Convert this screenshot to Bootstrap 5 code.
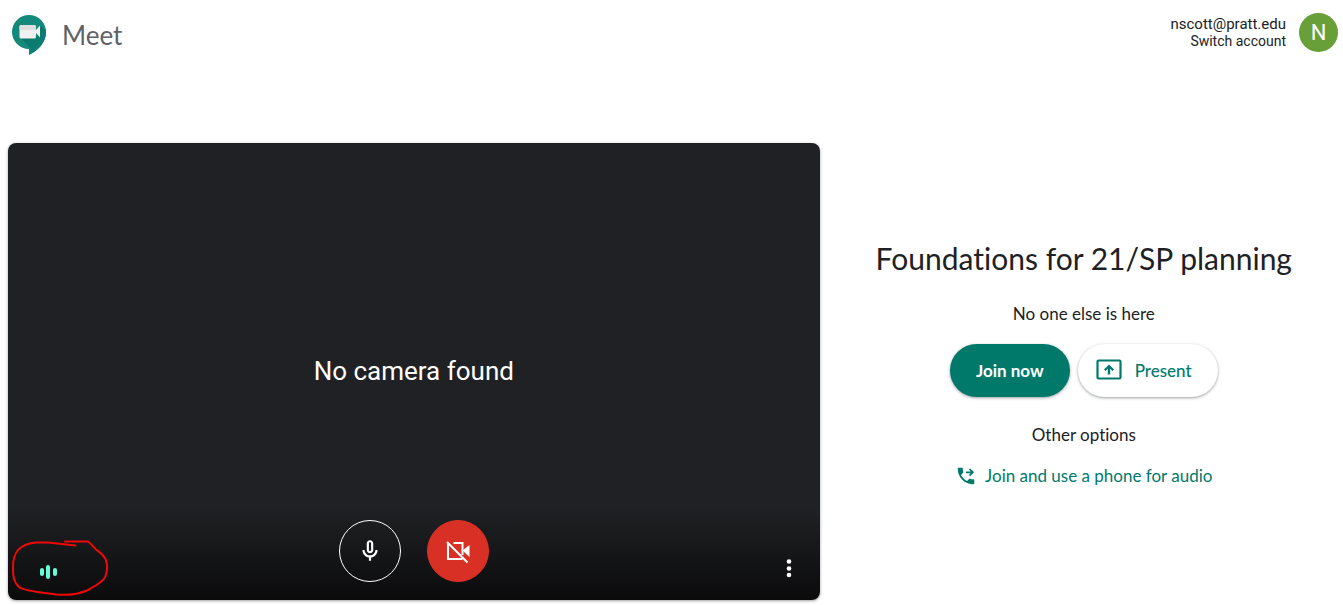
<!DOCTYPE html>
<html lang="en">
<head>
<meta charset="utf-8">
<meta name="viewport" content="width=device-width, initial-scale=1">
<title>Meet</title>
<link href="https://cdn.jsdelivr.net/npm/bootstrap@5.3.0/dist/css/bootstrap.min.css" rel="stylesheet">
<style>
  :root { --meet-green: #00796b; --ink: #202124; }
  body { font-family: Roboto, "Liberation Sans", sans-serif; color: var(--ink); background: #fff; font-variant-ligatures: none; }
  svg { display: block; flex-shrink: 0; }
  .topbar { padding: 13px 5px 0 8px; min-height: 143px; }
  .brand-name { font: 400 26px/36px Lato, sans-serif; color: #5f6368; }
  .account { font-size: 15px; line-height: 17px; padding: 3px 13px 0 0; }
  .account-switch { font-size: 14px; color: inherit; }
  .avatar { width: 39px; height: 39px; background: #689f38; color: #fff; font-size: 22px; line-height: 39px; }
  .stage { display: grid; grid-template-columns: minmax(0, 21fr) minmax(0, 13fr); gap: 13px; padding: 0 8px 5px; }
  .preview { aspect-ratio: 16 / 9; border-radius: 8px; box-shadow: 0 1px 3px rgba(60,64,67,.5);
    background: linear-gradient(to bottom, #202124 80%, #0b0b0c 100%); }
  .preview-text { font-size: 26px; line-height: 32px; color: #fff; }
  .controls { bottom: 18px; gap: 26px; }
  .round-btn { width: 62px; height: 62px; border: 1px solid #fff; background: transparent; color: #fff; }
  .round-btn.off { background: #d93025; border-color: #d93025; }
  .more-btn { right: 19px; bottom: 20px; color: #fff; }
  .mic-level { left: 3px; bottom: 3px; }
  .join-panel { font-family: "Google Sans", Lato, sans-serif; padding-bottom: 18px; }
  .meeting-title { font-size: 30px; line-height: 40px; font-weight: 400; margin-bottom: 26px; }
  .note { font-size: 17px; line-height: 20px; }
  .pill { height: 53px; border-radius: 27px; padding: 0 26px; border: 0; font-size: 17px; font-weight: 700; color: var(--meet-green); background: #fff;
    box-shadow: 0 1px 3px rgba(60,64,67,.5); }
  .pill.solid { background: var(--meet-green); color: #fff; }
  .pill.outlined { padding: 0 26px 0 18px; font-weight: 500; gap: 13px; }
  .phone-link { font-size: 17px; line-height: 22px; color: var(--meet-green); }
  @media (max-width: 800px) { .stage { grid-template-columns: minmax(0, 1fr); } }
</style>
</head>
<body>
<header class="topbar d-flex justify-content-between align-items-start">
  <div class="d-flex align-items-center">
    <svg width="42" height="44" viewBox="0 1 42 44" aria-hidden="true">
      <defs><linearGradient id="shade" x1="0" y1="0" x2="1" y2="1"><stop offset="0" stop-color="#0b6f64"/><stop offset="1" stop-color="#0b8577"/></linearGradient></defs>
      <path d="M21 3a17 17 0 0 0 0 34v6C31 38 38 30 38 20A17 17 0 0 0 21 3z" fill="#12897b"/>
      <path d="M13 26 23 36.500 21.500 42.500C30 38 38 31 38 20V18L31.500 13 28 26z" fill="url(#shade)"/>
      <path d="M13 13h13.500a1.500 1.500 0 0 1 1.500 1.500V18l4-4.500v12L28 21v4a1.500 1.500 0 0 1-1.500 1.500H13a1.500 1.500 0 0 1-1.500-1.500V14.500A1.500 1.500 0 0 1 13 13z" fill="#f1f1f1"/>
      <path d="M11.500 18v-3.500A1.500 1.500 0 0 1 13 13h13.500a1.500 1.500 0 0 1 1.500 1.500V18z" fill="#dedede"/>
    </svg>
    <span class="brand-name ps-2 ms-1">Meet</span>
  </div>
  <div class="d-flex">
    <div class="account text-end">
      <div>nscott@pratt.edu</div>
      <a class="account-switch text-decoration-none d-block" href="#">Switch account</a>
    </div>
    <div class="avatar rounded-circle text-center">N</div>
  </div>
</header>

<main class="stage">
  <section class="preview position-relative d-flex align-items-center justify-content-center" aria-label="Camera preview">
    <div class="preview-text">No camera found</div>
    <div class="controls position-absolute start-50 translate-middle-x d-flex">
      <button type="button" class="round-btn rounded-circle d-flex align-items-center justify-content-center p-0" aria-label="Turn off microphone">
        <svg width="26" height="26" viewBox="0 0 24 24" fill="currentColor"><path d="M12 14c1.660 0 3-1.340 3-3V5c0-1.660-1.340-3-3-3S9 3.340 9 5v6c0 1.660 1.340 3 3 3zm-1-9c0-.55.45-1 1-1s1 .45 1 1v6c0 .55-.45 1-1 1s-1-.45-1-1V5zm6 6c0 2.760-2.240 5-5 5s-5-2.240-5-5H5c0 3.530 2.610 6.430 6 6.920V21h2v-3.080c3.390-.49 6-3.390 6-6.920h-2z"/></svg>
      </button>
      <button type="button" class="round-btn off rounded-circle d-flex align-items-center justify-content-center p-0" aria-label="Turn on camera">
        <svg width="28" height="28" viewBox="0 0 28 28" fill="none" stroke="currentColor" stroke-width="2"><path d="M4 5.500V22h14.500M3 5l20.500 20.500M9.500 6h9v12"/><path d="M18.500 13.500 25.500 8v12z" fill="currentColor" stroke="none"/></svg>
      </button>
    </div>
    <button type="button" class="more-btn btn border-0 p-0 position-absolute" aria-label="More options">
      <svg width="24" height="24" viewBox="0 0 24 24" fill="currentColor"><circle cx="12" cy="5.500" r="2.300"/><circle cx="12" cy="12.500" r="2.300"/><circle cx="12" cy="19" r="2.300"/></svg>
    </button>
    <svg class="mic-level position-absolute" width="98" height="58" viewBox="0 0 98 58" role="img" aria-label="Microphone level">
      <g fill="#64ffda"><rect x="29" y="29" width="4" height="8" rx="2"/><rect x="35" y="26" width="4" height="14" rx="2"/><rect x="42" y="29" width="4" height="8" rx="2"/></g>
      <path d="M64.500 6.500 46 4.500 38 3.500H25C17 4 11 7 7 11 3 16 2 22 2 28c0 11 1 15 6 20 5 4 22 5.500 37 7.500 12 1 22 0 31-4 7-4 14-7 18-13 2-5 3-11 1-17-2-6-6-8-10-11-3-3-5-6-8-8H54" fill="none" stroke="#f00808" stroke-width="2" stroke-linejoin="round" stroke-linecap="round"/>
    </svg>
  </section>

  <section class="join-panel d-flex flex-column align-items-center justify-content-center text-center">
    <h1 class="meeting-title">Foundations for 21/SP planning</h1>
    <p class="note mb-3 pb-1">No one else is here</p>
    <div class="d-flex flex-wrap justify-content-center gap-2">
      <button type="button" class="pill solid">Join now</button>
      <button type="button" class="pill outlined d-flex align-items-center">
        <svg width="26" height="22" viewBox="0 0 26 22" aria-hidden="true"><rect x="1.500" y="1.500" width="23" height="18" rx="1" fill="none" stroke="currentColor" stroke-width="2.200"/><path d="M8 10.500 13 5.500l5 5-1.500 1.400L14.200 9.700V15.500h-2.400V9.700L9.500 11.900z" fill="currentColor"/></svg>
        <span>Present</span>
      </button>
    </div>
    <p class="note mt-4 pt-1 mb-3">Other options</p>
    <a class="phone-link text-decoration-none d-flex align-items-center gap-2 pt-1" href="#">
      <svg width="22" height="22" viewBox="0 0 24 24" fill="currentColor" aria-hidden="true"><path d="M20 15.500c-1.250 0-2.450-.2-3.570-.57-.35-.11-.74-.03-1.020.24l-2.200 2.200c-2.830-1.440-5.150-3.750-6.590-6.590l2.200-2.200c.28-.28.36-.67.250-1.020C8.700 6.450 8.500 5.250 8.500 4c0-.55-.45-1-1-1H4c-.55 0-1 .45-1 1 0 9.390 7.610 17 17 17 .55 0 1-.45 1-1v-3.500c0-.55-.45-1-1-1z"/><path d="M12 7h5.200l-2-2 1.300-1.300L20.800 8l-4.300 4.300-1.300-1.300 2-2H12z"/></svg>
      <span>Join and use a phone for audio</span>
    </a>
  </section>
</main>
<script src="https://cdn.jsdelivr.net/npm/bootstrap@5.3.0/dist/js/bootstrap.bundle.min.js"></script>
</body>
</html>
